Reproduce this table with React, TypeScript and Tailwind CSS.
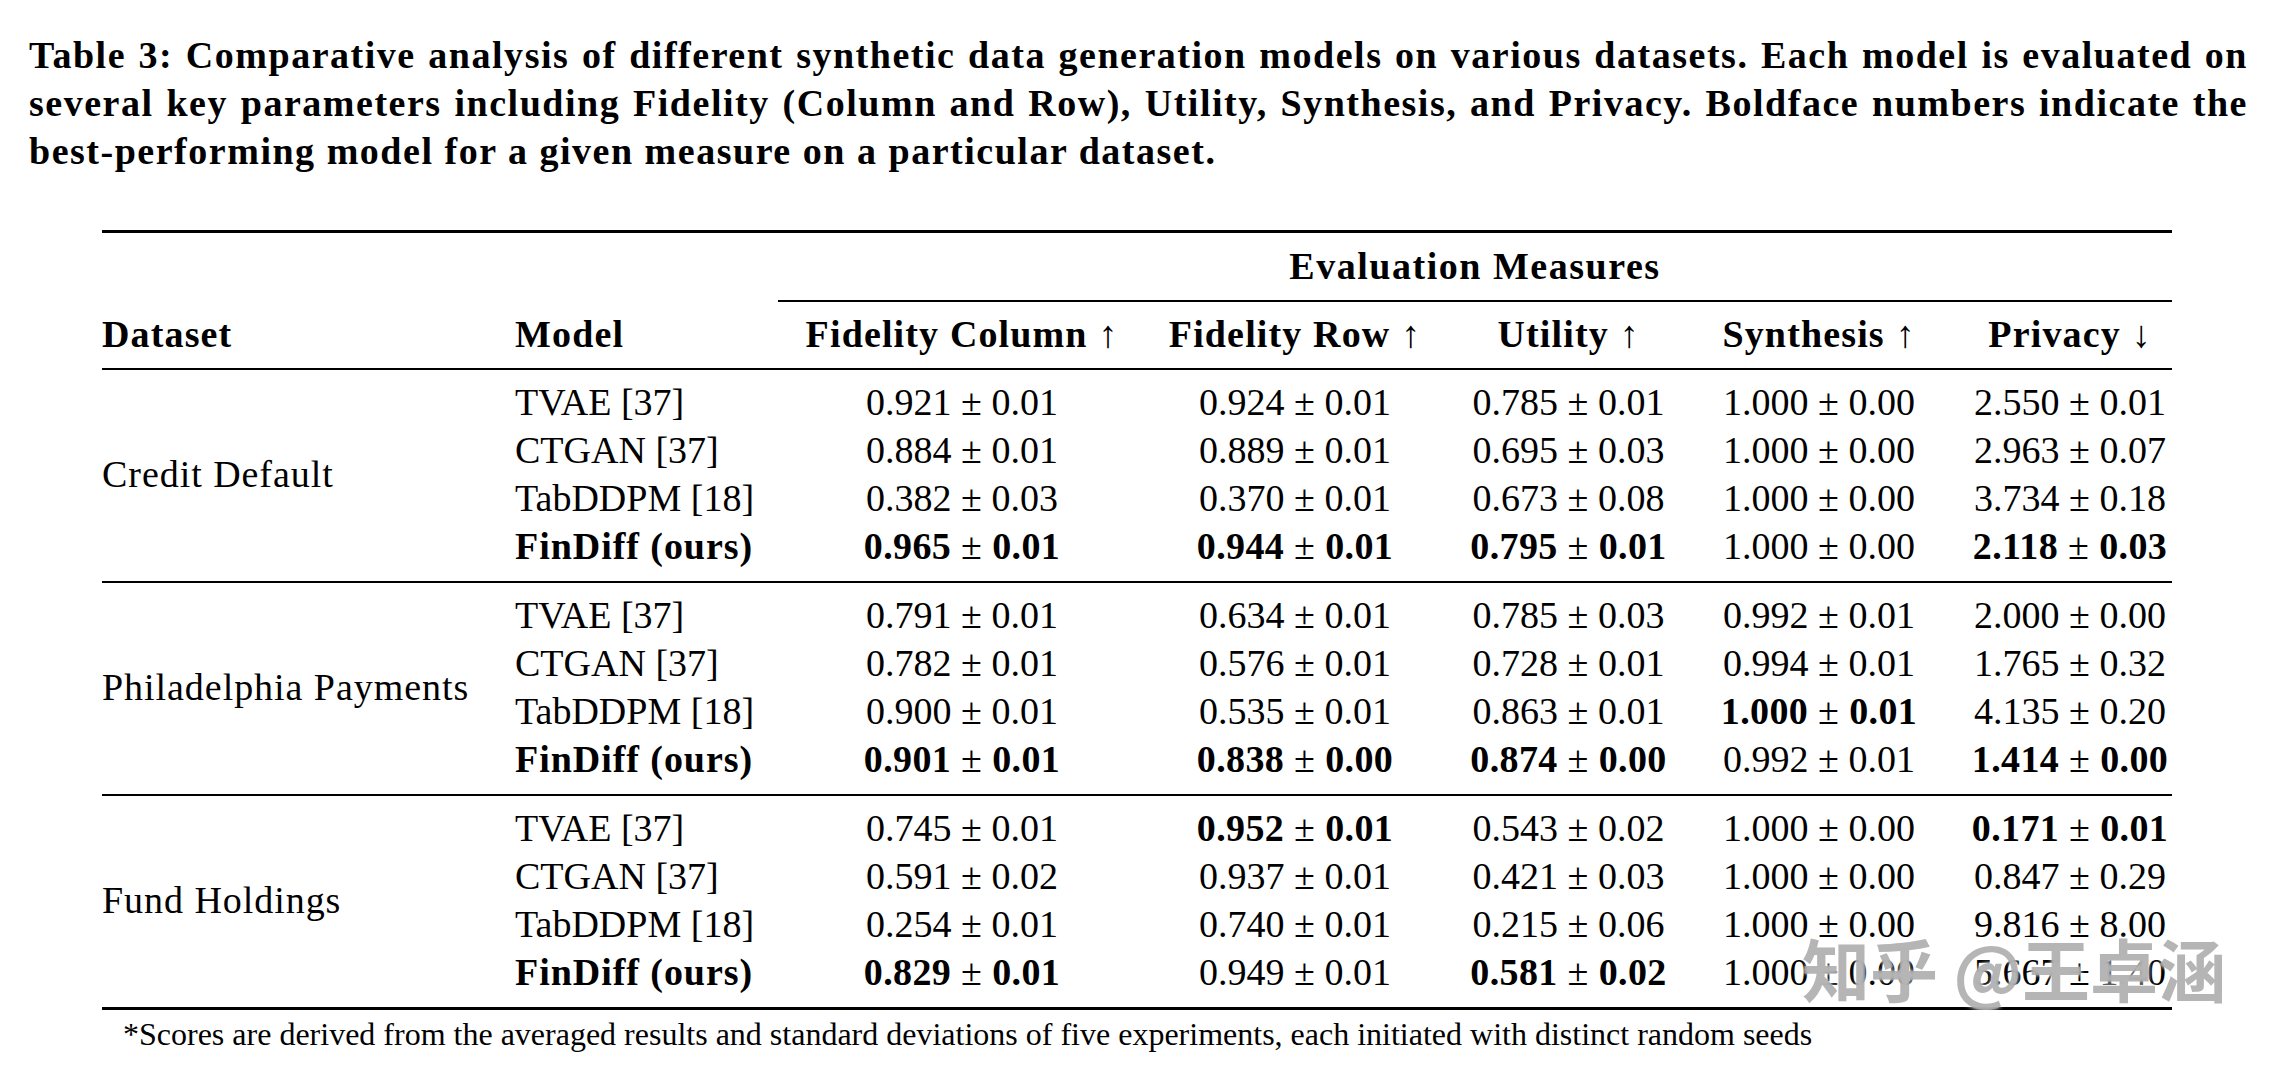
import React from 'react';

type Row = { model: string; bold?: boolean; vals: string[] };
type Group = { name: string; rows: Row[] };

// '!' prefix marks a boldface (best) score
const groups: Group[] = [
  {
    name: 'Credit Default',
    rows: [
      { model: 'TVAE [37]', vals: ['0.921 ± 0.01', '0.924 ± 0.01', '0.785 ± 0.01', '1.000 ± 0.00', '2.550 ± 0.01'] },
      { model: 'CTGAN [37]', vals: ['0.884 ± 0.01', '0.889 ± 0.01', '0.695 ± 0.03', '1.000 ± 0.00', '2.963 ± 0.07'] },
      { model: 'TabDDPM [18]', vals: ['0.382 ± 0.03', '0.370 ± 0.01', '0.673 ± 0.08', '1.000 ± 0.00', '3.734 ± 0.18'] },
      { model: 'FinDiff (ours)', bold: true, vals: ['!0.965 ± 0.01', '!0.944 ± 0.01', '!0.795 ± 0.01', '1.000 ± 0.00', '!2.118 ± 0.03'] },
    ],
  },
  {
    name: 'Philadelphia Payments',
    rows: [
      { model: 'TVAE [37]', vals: ['0.791 ± 0.01', '0.634 ± 0.01', '0.785 ± 0.03', '0.992 ± 0.01', '2.000 ± 0.00'] },
      { model: 'CTGAN [37]', vals: ['0.782 ± 0.01', '0.576 ± 0.01', '0.728 ± 0.01', '0.994 ± 0.01', '1.765 ± 0.32'] },
      { model: 'TabDDPM [18]', vals: ['0.900 ± 0.01', '0.535 ± 0.01', '0.863 ± 0.01', '!1.000 ± 0.01', '4.135 ± 0.20'] },
      { model: 'FinDiff (ours)', bold: true, vals: ['!0.901 ± 0.01', '!0.838 ± 0.00', '!0.874 ± 0.00', '0.992 ± 0.01', '!1.414 ± 0.00'] },
    ],
  },
  {
    name: 'Fund Holdings',
    rows: [
      { model: 'TVAE [37]', vals: ['0.745 ± 0.01', '!0.952 ± 0.01', '0.543 ± 0.02', '1.000 ± 0.00', '!0.171 ± 0.01'] },
      { model: 'CTGAN [37]', vals: ['0.591 ± 0.02', '0.937 ± 0.01', '0.421 ± 0.03', '1.000 ± 0.00', '0.847 ± 0.29'] },
      { model: 'TabDDPM [18]', vals: ['0.254 ± 0.01', '0.740 ± 0.01', '0.215 ± 0.06', '1.000 ± 0.00', '9.816 ± 8.00'] },
      { model: 'FinDiff (ours)', bold: true, vals: ['!0.829 ± 0.01', '0.949 ± 0.01', '!0.581 ± 0.02', '1.000 ± 0.00', '5.667 ± 1.40'] },
    ],
  },
];

const cols = 'grid grid-cols-[390px_286px_368px_298px_249px_252px_227px]';

function Score({ v, last }: { v: string; last?: boolean }) {
  const bold = v.startsWith('!');
  const [a, b] = v.replace('!', '').split(' ± ');
  return (
    <div className={`text-center whitespace-nowrap ${last ? 'pl-[23px]' : ''} ${bold ? 'font-bold tracking-[0.01em]' : ''}`}>
      {a} <span className="font-normal">±</span> {b}
    </div>
  );
}

function Head({ label, down, last }: { label: string; down?: boolean; last?: boolean }) {
  return (
    <div className={`text-center font-bold tracking-[0.03em] whitespace-nowrap ${last ? 'pl-[23px]' : ''}`}>
      {label} <span className="font-normal">{down ? '↓' : '↑'}</span>
    </div>
  );
}

export default function App() {
  return (
    <div className="relative w-[2284px] h-[1072px] bg-white text-black font-['Liberation_Serif',serif] overflow-hidden">
      {/* Caption */}
      <div className="ml-[29px] w-[2219px] pt-[31px] text-[38px] leading-[48px] font-bold tracking-[0.04em]">
        <div className="text-justify [text-align-last:justify]">
          Table 3: Comparative analysis of different synthetic data generation models on various datasets. Each model is evaluated on
        </div>
        <div className="text-justify [text-align-last:justify]">
          several key parameters including Fidelity (Column and Row), Utility, Synthesis, and Privacy. Boldface numbers indicate the
        </div>
        <div>best-performing model for a given measure on a particular dataset.</div>
      </div>

      {/* Table */}
      <div className="ml-[102px] w-[2070px] mt-[55px] text-[38px]">
        <div className="h-[3px] bg-black" />
        <div className={`${cols} h-[67px] items-center`}>
          <div />
          <div />
          <div className="col-span-5 text-center font-bold tracking-[0.04em]">Evaluation Measures</div>
        </div>
        <div className={cols}>
          <div />
          <div />
          <div className="col-span-5 h-[1.5px] bg-black" />
        </div>
        <div className={`${cols} h-[66px] items-center`}>
          <div className="font-bold tracking-[0.03em]">Dataset</div>
          <div className="pl-[23px] font-bold tracking-[0.03em]">Model</div>
          <Head label="Fidelity Column" />
          <Head label="Fidelity Row" />
          <Head label="Utility" />
          <Head label="Synthesis" />
          <Head label="Privacy" down last />
        </div>
        <div className="h-[2px] bg-black" />

        {groups.map((g, gi) => (
          <React.Fragment key={g.name}>
            {gi > 0 && <div className="h-[2px] bg-black" />}
            <div className={`${cols} grid-rows-[repeat(4,48px)] items-center pt-[9px] pb-[10px]`}>
              <div className="row-span-4 whitespace-nowrap tracking-[0.025em]">{g.name}</div>
              {g.rows.map((r) => (
                <React.Fragment key={r.model}>
                  <div className={`pl-[23px] whitespace-nowrap ${r.bold ? 'font-bold tracking-[0.025em]' : ''}`}>{r.model}</div>
                  {r.vals.map((v, i) => (
                    <Score key={i} v={v} last={i === 4} />
                  ))}
                </React.Fragment>
              ))}
            </div>
          </React.Fragment>
        ))}
        <div className="h-[3px] bg-black" />

        <div className="pl-[21px] text-[32px] leading-[48px]">
          *Scores are derived from the averaged results and standard deviations of five experiments, each initiated with distinct random seeds
        </div>
      </div>

      {/* Watermark */}
      <div className="absolute left-[1802px] top-[926px] text-[68px] leading-[84px] font-bold text-[#a3a3a3]/80 font-['Noto_Sans_CJK_SC',sans-serif] [text-shadow:0_0_4px_#fff] whitespace-nowrap">
        知乎 @王卓涵
      </div>
    </div>
  );
}
